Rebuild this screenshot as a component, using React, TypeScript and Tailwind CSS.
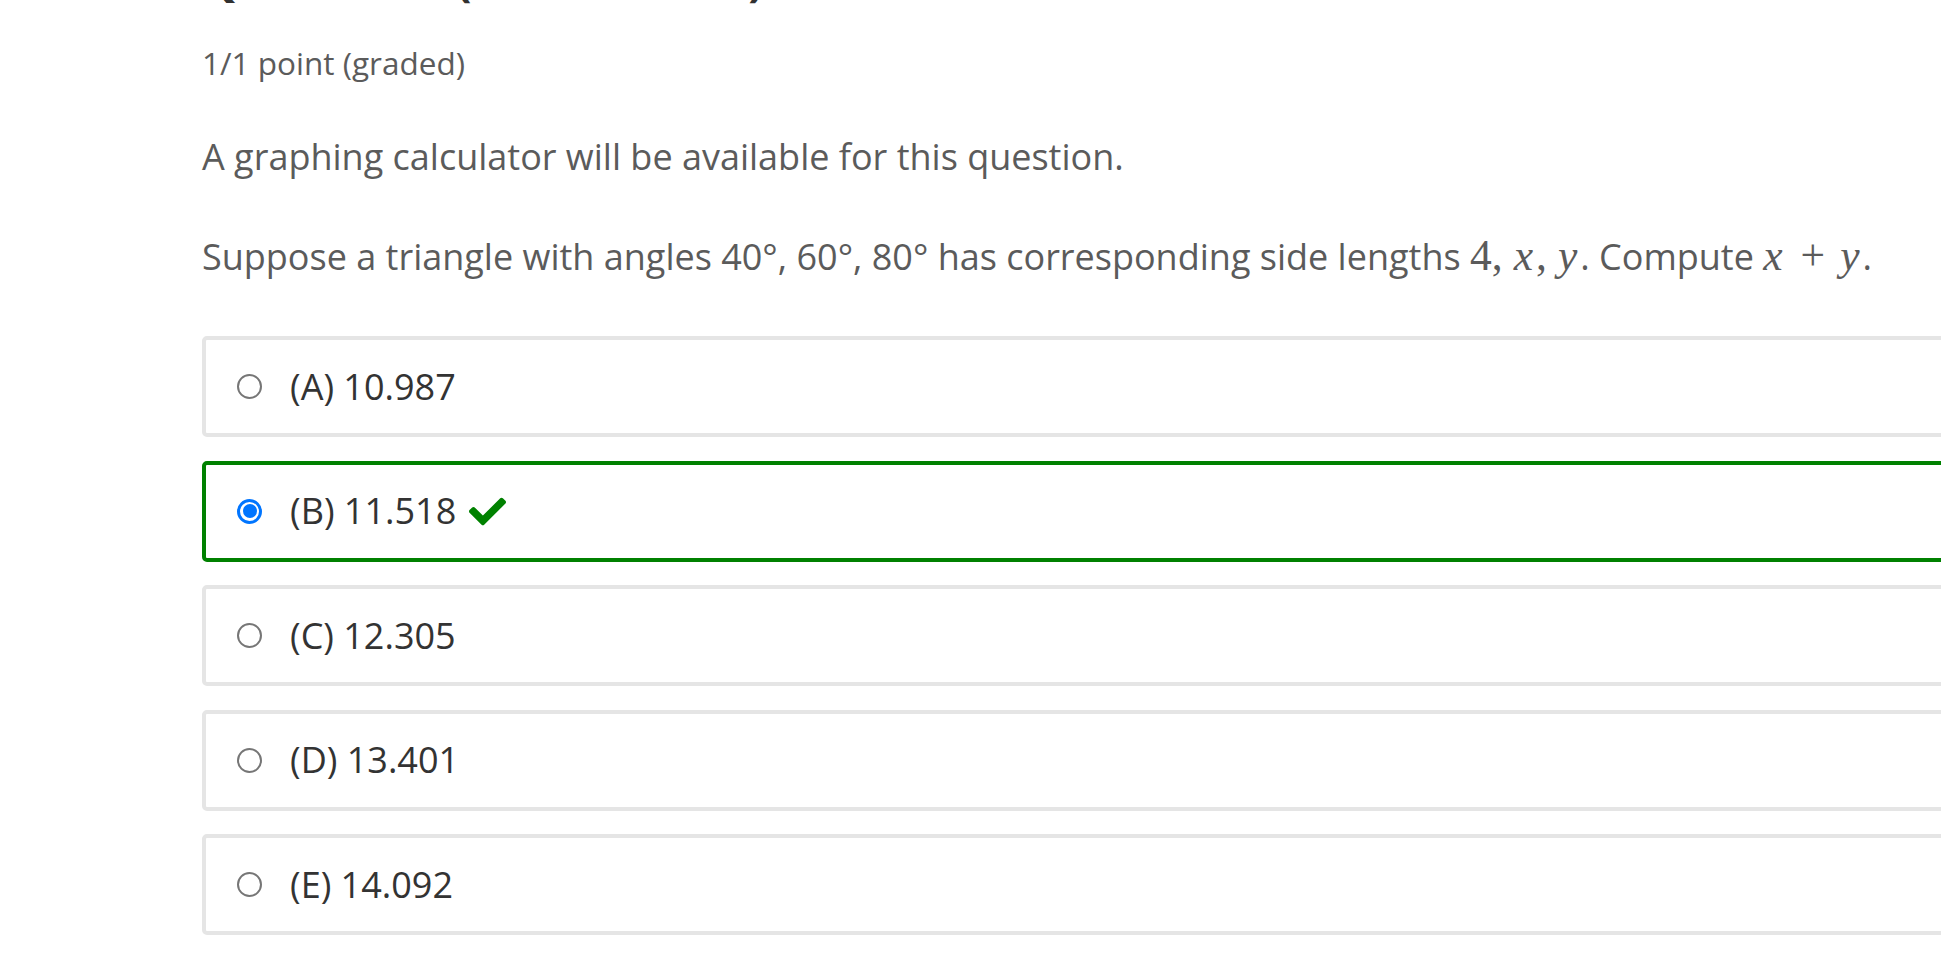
import { FaCheck } from "react-icons/fa";

const options = [
  { id: "A", value: "10.987" },
  { id: "B", value: "11.518", selected: true },
  { id: "C", value: "12.305" },
  { id: "D", value: "13.401" },
  { id: "E", value: "14.092" },
];

function Radio({ checked }: { checked?: boolean }) {
  if (checked) {
    return (
      <span className="flex h-[25px] w-[25px] shrink-0 items-center justify-center rounded-full border-[3px] border-[#0075ff] bg-white">
        <span className="h-[14px] w-[14px] rounded-full bg-[#0075ff]"></span>
      </span>
    );
  }
  return <span className="h-[25px] w-[25px] shrink-0 rounded-full border-2 border-[#767676] bg-white"></span>;
}

function M({ children, italic }: { children: React.ReactNode; italic?: boolean }) {
  return (
    <span className={`font-['Liberation_Serif',serif] text-[1.21em] ${italic ? "italic pr-[3px]" : ""}`}>
      {children}
    </span>
  );
}

export default function App() {
  return (
    <main className="flex min-h-screen w-full flex-col overflow-hidden bg-white pl-[202px] font-['Open_Sans',sans-serif]">
      {/* heading scrolled mostly out of view */}
      <h3 className="-mt-[44px] whitespace-nowrap text-[45px] font-bold leading-none text-[#313131]">
        Question 6 (Law of Sines)
      </h3>

      <p className="mt-[40px] text-[31.5px] leading-[44px] text-[#5b5b5b]">1/1 point (graded)</p>

      <p className="mt-[47px] text-[36px] leading-[50px] text-[#5b5b5b]">
        A graphing calculator will be available for this question.
      </p>

      <p className="mt-[48px] whitespace-nowrap text-[36px] leading-[50px] text-[#5b5b5b]">
        Suppose a triangle with angles 40°, 60°, 80° has corresponding side lengths{" "}
        <M>4,</M>
        <span className="inline-block w-[11px]"></span>
        <M italic>x</M>
        <M>,</M>
        <span className="inline-block w-[11px]"></span>
        <M italic>y</M>. Compute <M italic>x</M>
        <span className="inline-block w-[15px]"></span>
        <M>+</M>
        <span className="inline-block w-[15px]"></span>
        <M italic>y</M>.
      </p>

      <div className="mt-[54px] flex w-[1800px] flex-col gap-[23.5px]">
        {options.map((o) => (
          <label
            key={o.id}
            className={`flex h-[101px] items-center rounded-[5px] border-4 pl-[31px] ${
              o.selected ? "border-[#008100]" : "border-[#e5e5e5]"
            }`}
          >
            <Radio checked={o.selected} />
            <span className="ml-[28px] text-[36px] leading-[50px] text-[#333333]">
              ({o.id}) {o.value}
            </span>
            {o.selected && <FaCheck className="ml-[13px] text-[#008100]" size={37} />}
          </label>
        ))}
      </div>
    </main>
  );
}
